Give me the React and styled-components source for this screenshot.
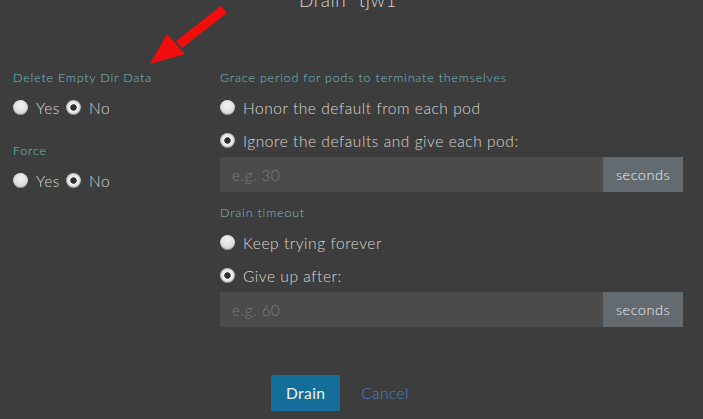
import React, { useState } from "react";
import styled, { createGlobalStyle } from "styled-components";

const GlobalStyle = createGlobalStyle`
  html, body {
    margin: 0;
    padding: 0;
    background: #3d3d3d;
  }
  body {
    font-family: Lato, "Open Sans", sans-serif;
    font-weight: 300;
    color: #dad7d2;
  }
`;

const RADIO_GROUPS = [
  { key: "deleteLocalData", label: "Delete Empty Dir Data" },
  { key: "force", label: "Force" },
];

const App = () => {
  const [flags, setFlags] = useState({ deleteLocalData: false, force: false });
  const [grace, setGrace] = useState("custom");
  const [timeout, setTimeoutMode] = useState("custom");

  return (
    <Page>
      <GlobalStyle />
      <Title>Drain &quot;tjw1&quot;</Title>
      <Columns>
        <LeftColumn>
          {RADIO_GROUPS.map(group => (
            <Group key={group.key}>
              <Label>{group.label}</Label>
              <InlineRow>
                <Choice>
                  <Radio
                    type="radio"
                    checked={flags[group.key]}
                    onChange={() => setFlags({ ...flags, [group.key]: true })}
                  />
                  Yes
                </Choice>
                <Choice>
                  <Radio
                    type="radio"
                    checked={!flags[group.key]}
                    onChange={() => setFlags({ ...flags, [group.key]: false })}
                  />
                  No
                </Choice>
              </InlineRow>
            </Group>
          ))}
        </LeftColumn>

        <RightColumn>
          <Group>
            <Label>Grace period for pods to terminate themselves</Label>
            <StackRow>
              <Choice>
                <Radio
                  type="radio"
                  checked={grace === "default"}
                  onChange={() => setGrace("default")}
                />
                Honor the default from each pod
              </Choice>
            </StackRow>
            <StackRow>
              <Choice>
                <Radio
                  type="radio"
                  checked={grace === "custom"}
                  onChange={() => setGrace("custom")}
                />
                Ignore the defaults and give each pod:
              </Choice>
            </StackRow>
            <InputGroup>
              <Input placeholder="e.g. 30" />
              <Addon>seconds</Addon>
            </InputGroup>
          </Group>

          <Group $spaced>
            <Label>Drain timeout</Label>
            <StackRow>
              <Choice>
                <Radio
                  type="radio"
                  checked={timeout === "forever"}
                  onChange={() => setTimeoutMode("forever")}
                />
                Keep trying forever
              </Choice>
            </StackRow>
            <StackRow>
              <Choice>
                <Radio
                  type="radio"
                  checked={timeout === "custom"}
                  onChange={() => setTimeoutMode("custom")}
                />
                Give up after:
              </Choice>
            </StackRow>
            <InputGroup>
              <Input placeholder="e.g. 60" />
              <Addon>seconds</Addon>
            </InputGroup>
          </Group>
        </RightColumn>
      </Columns>

      <Footer>
        <PrimaryButton>Drain</PrimaryButton>
        <LinkButton>Cancel</LinkButton>
      </Footer>

      <Arrow viewBox="0 0 703 419" width="703" height="419">
        <path d="M221 6 L227 13 L182 48 L176 41 Z" fill="#f20d0d" />
        <polygon points="150,64 167,34 185,54" fill="#f20d0d" />
      </Arrow>
    </Page>
  );
};
export default App;

const Page = styled.div`
  position: relative;
  width: 703px;
  height: 419px;
  overflow: hidden;
`;

const Title = styled.h2`
  margin: -12px 0 0;
  height: 20px;
  text-align: center;
  font-size: 19px;
  font-weight: 300;
  color: #d4d4d4;
  letter-spacing: 0.5px;
`;

const Columns = styled.div`
  display: flex;
  padding: 62px 20px 0 13px;
`;

const LeftColumn = styled.div`
  width: 207px;
  display: flex;
  flex-direction: column;
  gap: 19px;
`;

const RightColumn = styled.div`
  flex: 1;
  display: flex;
  flex-direction: column;
`;

const Group = styled.div`
  display: flex;
  flex-direction: column;
  margin-top: ${props => (props.$spaced ? "13px" : "0")};
`;

const Label = styled.div`
  height: 16px;
  line-height: 16px;
  margin-bottom: 6px;
  font-size: 12.5px;
  letter-spacing: 0.8px;
  color: #74bfc3;
`;

const InlineRow = styled.div`
  display: flex;
  align-items: center;
  gap: 6px;
  height: 32px;
`;

const StackRow = styled.div`
  display: flex;
  align-items: center;
  height: 32px;
  & + & {
    margin-top: 1px;
  }
`;

const Choice = styled.label`
  display: flex;
  align-items: center;
  gap: 8px;
  font-size: 15.5px;
  letter-spacing: 0.55px;
  color: #dad7d2;
  cursor: pointer;
`;

const Radio = styled.input`
  appearance: none;
  margin: 0 0 2px;
  width: 15px;
  height: 15px;
  border-radius: 50%;
  background: radial-gradient(circle at 50% 35%, #f2f2f2 0%, #dcdcdc 60%, #b9b9b9 100%);
  box-shadow: inset 0 -1px 1px rgba(0, 0, 0, 0.25);
  cursor: pointer;

  &:checked {
    background: radial-gradient(
      circle,
      #2e2e2e 0,
      #2e2e2e 2.8px,
      #f4f4f4 3.6px,
      #e2e2e2 5.8px,
      #b7b7b7 7.5px
    );
  }
`;

const InputGroup = styled.div`
  display: flex;
  height: 35px;
`;

const Input = styled.input`
  flex: 1;
  min-width: 0;
  border: none;
  outline: none;
  padding: 0 12px;
  background: #4b4b4b;
  font-family: Lato, "Open Sans", sans-serif;
  font-weight: 300;
  font-size: 15.5px;
  letter-spacing: 0.4px;
  color: #dad7d2;

  &::placeholder {
    color: #7c7c7c;
  }
`;

const Addon = styled.div`
  width: 80px;
  display: flex;
  align-items: center;
  justify-content: center;
  background: #636a70;
  font-size: 14.5px;
  letter-spacing: 0.5px;
  color: #f0f0f0;
`;

const Footer = styled.div`
  display: flex;
  justify-content: center;
  align-items: center;
  gap: 21px;
  margin-top: 48px;
  padding-right: 23px;
`;

const PrimaryButton = styled.button`
  width: 69px;
  height: 36px;
  border: none;
  border-radius: 2px;
  background: #136f99;
  font-family: Lato, "Open Sans", sans-serif;
  font-weight: 400;
  font-size: 15.5px;
  letter-spacing: 0.4px;
  color: #f2f2f2;
  cursor: pointer;
`;

const LinkButton = styled.button`
  border: none;
  background: none;
  padding: 0;
  font-family: Lato, "Open Sans", sans-serif;
  font-weight: 300;
  font-size: 15.5px;
  letter-spacing: 0.4px;
  color: #4686c0;
  cursor: pointer;
`;

const Arrow = styled.svg`
  position: absolute;
  top: 0;
  left: 0;
  pointer-events: none;
`;
